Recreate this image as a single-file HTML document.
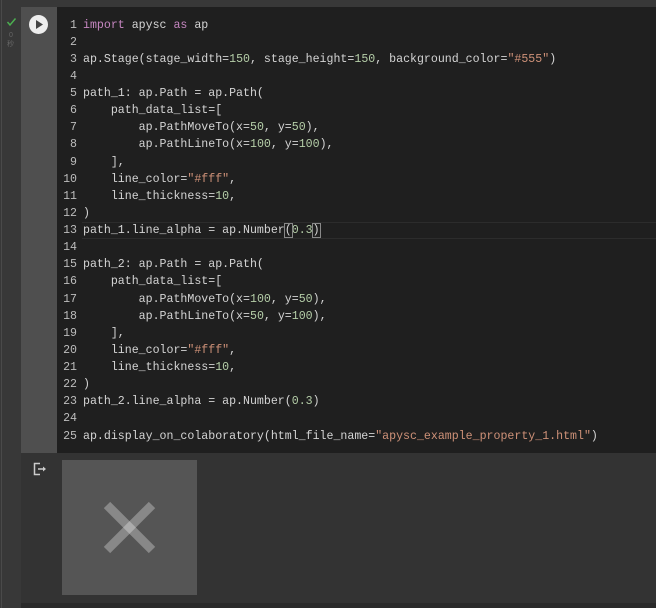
<!DOCTYPE html>
<html><head><meta charset="utf-8"><style>
html,body{margin:0;padding:0;}
body{width:656px;height:608px;background:#383838;position:relative;overflow:hidden;font-family:"Liberation Mono","Noto Sans CJK JP",monospace;}
.lstrip{position:absolute;left:1px;top:0;width:1px;height:608px;background:#4a4a4a;}
.gutter{position:absolute;left:21px;top:7px;width:36px;height:446px;background:#4f4f4f;}
.code{position:absolute;left:57px;top:7px;width:599px;height:446px;background:#1f1f1f;}
.out{position:absolute;left:21px;top:453px;width:635px;height:150px;background:#333333;}
.below{position:absolute;left:21px;top:603px;width:635px;height:5px;background:#2a2a2a;}
.ln{position:absolute;left:57px;width:20px;text-align:right;color:#bdbdbd;font-size:11.6px;line-height:17.125px;}
.tx{position:absolute;left:83px;color:#d4d4d4;font-size:11.6px;line-height:17.125px;white-space:pre;}
.k{color:#c586c0}.n{color:#b5cea8}.s{color:#ce9178}
.hl{position:absolute;left:82px;top:222px;width:574px;height:17px;border-top:1px solid #2c2c2c;border-bottom:1px solid #2c2c2c;box-sizing:border-box;}
.br{outline:1px solid #888;}
.img{position:absolute;left:62px;top:460px;width:135px;height:135px;background:#555;}
</style></head><body>
<div class="lstrip"></div>
<div class="gutter"></div>
<div class="code"></div>
<div class="out"></div>
<div class="below"></div>
<svg style="position:absolute;left:0;top:0" width="60" height="60">
<path d="M7.5 22 L10 25 L15.5 18.5" stroke="#4caf50" stroke-width="1.5" fill="none"/>
<text x="9" y="37" fill="#666" font-size="7" font-family="Liberation Sans">0</text>
<text x="7" y="46" fill="#666" font-size="7" font-family="Noto Sans CJK JP">秒</text>
<circle cx="38.5" cy="24.5" r="9.5" fill="#eee"/>
<path d="M36 20 L36 29 L43 24.5 Z" fill="#444"/>
</svg>
<div class="hl"></div>
<svg style="position:absolute;left:33px;top:462px" width="16" height="14">
<path d="M7 1.5 H1.5 V12.5 H7" stroke="#ccc" stroke-width="1.5" fill="none"/>
<path d="M5 7 H11" stroke="#ccc" stroke-width="1.5"/><path d="M10 4.5 L13 7 L10 9.5Z" fill="#ccc"/>
</svg>
<div class="img"><svg width="135" height="135"><line x1="45" y1="45" x2="90" y2="90" stroke="#fff" stroke-opacity="0.3" stroke-width="9"/><line x1="90" y1="45" x2="45" y2="90" stroke="#fff" stroke-opacity="0.3" stroke-width="9"/></svg></div>

<div class="ln" style="top:16.5px">1<br>2<br>3<br>4<br>5<br>6<br>7<br>8<br>9<br>10<br>11<br>12<br>13<br>14<br>15<br>16<br>17<br>18<br>19<br>20<br>21<br>22<br>23<br>24<br>25</div>
<div class="tx" style="top:16.5px"><span class="k">import</span> apysc <span class="k">as</span> ap

ap.Stage(stage_width=<span class="n">150</span>, stage_height=<span class="n">150</span>, background_color=<span class="s">"#555"</span>)

path_1: ap.Path = ap.Path(
    path_data_list=[
        ap.PathMoveTo(x=<span class="n">50</span>, y=<span class="n">50</span>),
        ap.PathLineTo(x=<span class="n">100</span>, y=<span class="n">100</span>),
    ],
    line_color=<span class="s">"#fff"</span>,
    line_thickness=<span class="n">10</span>,
)
path_1.line_alpha = ap.Number<span class="br">(</span><span class="n">0.3</span><span class="br">)</span>

path_2: ap.Path = ap.Path(
    path_data_list=[
        ap.PathMoveTo(x=<span class="n">100</span>, y=<span class="n">50</span>),
        ap.PathLineTo(x=<span class="n">50</span>, y=<span class="n">100</span>),
    ],
    line_color=<span class="s">"#fff"</span>,
    line_thickness=<span class="n">10</span>,
)
path_2.line_alpha = ap.Number(<span class="n">0.3</span>)

ap.display_on_colaboratory(html_file_name=<span class="s">"apysc_example_property_1.html"</span>)</div>
</body></html>
